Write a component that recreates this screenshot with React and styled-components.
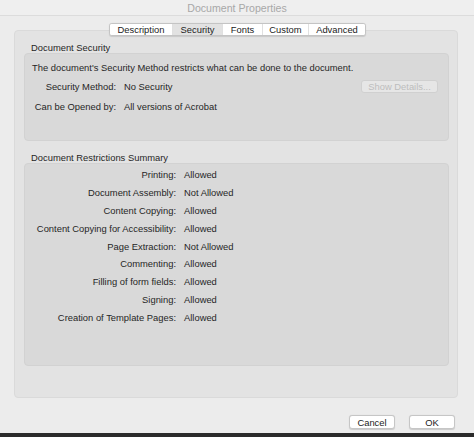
import styled, { createGlobalStyle } from "styled-components";

const GlobalStyle = createGlobalStyle`
  html, body {
    margin: 0;
    padding: 0;
    background: #2b2b2b;
  }
  * {
    box-sizing: border-box;
  }
`;

const TABS = [
  ["Description", 62],
  ["Security", 50],
  ["Fonts", 40],
  ["Custom", 46],
  ["Advanced", 57],
];

const RESTRICTIONS = [
  ["Printing", "Allowed"],
  ["Document Assembly", "Not Allowed"],
  ["Content Copying", "Allowed"],
  ["Content Copying for Accessibility", "Allowed"],
  ["Page Extraction", "Not Allowed"],
  ["Commenting", "Allowed"],
  ["Filling of form fields", "Allowed"],
  ["Signing", "Allowed"],
  ["Creation of Template Pages", "Allowed"],
];

const App = () => {
  return (
    <>
      <GlobalStyle />
      <Window>
        <TitleBar>Document Properties</TitleBar>
        <Body>
          <TabBar>
            {TABS.map(([tab, width]) => (
              <Tab key={tab} $width={width} $active={tab === "Security"}>
                {tab}
              </Tab>
            ))}
          </TabBar>
          <TabPanel>
            <GroupLabel>Document Security</GroupLabel>
            <SecurityBox>
              <Intro>The document's Security Method restricts what can be done to the document.</Intro>
              <SecurityRow>
                <FieldLabel $width={84}>Security Method:</FieldLabel>
                <FieldValue>No Security</FieldValue>
                <DetailsButton disabled>Show Details...</DetailsButton>
              </SecurityRow>
              <SecurityRow>
                <FieldLabel $width={84}>Can be Opened by:</FieldLabel>
                <FieldValue>All versions of Acrobat</FieldValue>
              </SecurityRow>
            </SecurityBox>

            <GroupLabel>Document Restrictions Summary</GroupLabel>
            <RestrictionsBox>
              {RESTRICTIONS.map(([label, value]) => (
                <RestrictionRow key={label}>
                  <FieldLabel $width={151}>{label}:</FieldLabel>
                  <FieldValue>{value}</FieldValue>
                </RestrictionRow>
              ))}
            </RestrictionsBox>
          </TabPanel>
          <Footer>
            <PushButton>Cancel</PushButton>
            <PushButton>OK</PushButton>
          </Footer>
        </Body>
      </Window>
    </>
  );
};

export default App;

const Window = styled.div`
  width: 474px;
  height: 433px;
  display: flex;
  flex-direction: column;
  background: #ececec;
  font-family: "Liberation Sans", Arial, sans-serif;
  font-size: 9.4px;
  color: #262626;
`;

const TitleBar = styled.div`
  height: 16px;
  display: flex;
  align-items: center;
  justify-content: center;
  background: #efefef;
  border-bottom: 1px solid #dcdcdc;
  color: #a8a8a8;
  font-size: 10.6px;
  padding-top: 1px;
`;

const Body = styled.div`
  flex: 1;
  display: flex;
  flex-direction: column;
  padding: 7px 16px 0 14px;
`;

const TabBar = styled.div`
  position: relative;
  z-index: 1;
  align-self: flex-start;
  display: flex;
  height: 13px;
  margin-left: 95px;
  background: #fff;
  border: 1px solid #c4c4c4;
  border-radius: 3px;
  box-shadow: 0 0.5px 1px rgba(0, 0, 0, 0.12);
  overflow: hidden;
`;

const Tab = styled.div`
  width: ${(p) => p.$width}px;
  display: flex;
  align-items: center;
  justify-content: center;
  background: ${(p) => (p.$active ? "#e2e2e2" : "#fff")};
  border-left: 1px solid #e0e0e0;
  color: #222;

  &:first-child {
    border-left: none;
  }
`;

const TabPanel = styled.div`
  height: 368px;
  margin-top: -6px;
  padding: 10px 8px 0 9px;
  background: #e3e3e3;
  border: 1px solid #dadada;
  border-radius: 4px;
  display: flex;
  flex-direction: column;
`;

const GroupLabel = styled.div`
  height: 12px;
  display: flex;
  align-items: center;
  padding-left: 7px;
`;

const GroupBox = styled.div`
  background: #d9d9d9;
  border: 1px solid #d2d2d2;
  border-radius: 4px;
  display: flex;
  flex-direction: column;
`;

const SecurityBox = styled(GroupBox)`
  height: 88px;
  padding: 7px 10px 0 7px;
  margin-bottom: 10px;
`;

const Intro = styled.div`
  height: 13px;
  display: flex;
  align-items: center;
  margin-bottom: 2px;
`;

const SecurityRow = styled.div`
  height: 20px;
  display: flex;
  align-items: center;
  gap: 8px;
`;

const FieldLabel = styled.span`
  width: ${(p) => p.$width}px;
  text-align: right;
  flex-shrink: 0;
  white-space: nowrap;
`;

const FieldValue = styled.span`
  white-space: nowrap;
`;

const DetailsButton = styled.button`
  margin-left: auto;
  width: 77px;
  height: 13px;
  padding: 0;
  font-family: inherit;
  font-size: 9.4px;
  color: #bdbdbd;
  background: #e6e6e6;
  border: 1px solid #d0d0d0;
  border-radius: 3px;
`;

const RestrictionsBox = styled(GroupBox)`
  height: 203px;
  padding: 2px 0 0 0;
`;

const RestrictionRow = styled.div`
  height: 17.8px;
  display: flex;
  align-items: center;
  gap: 8px;
`;

const Footer = styled.div`
  flex: 1;
  display: flex;
  justify-content: flex-end;
  align-items: flex-end;
  gap: 14px;
  padding: 0 3px 4px 0;
`;

const PushButton = styled.button`
  width: 46px;
  height: 14px;
  padding: 0;
  font-family: inherit;
  font-size: 9.4px;
  color: #222;
  background: #fff;
  border: 1px solid #c6c6c6;
  border-radius: 3px;
  box-shadow: 0 0.5px 1px rgba(0, 0, 0, 0.15);
`;
